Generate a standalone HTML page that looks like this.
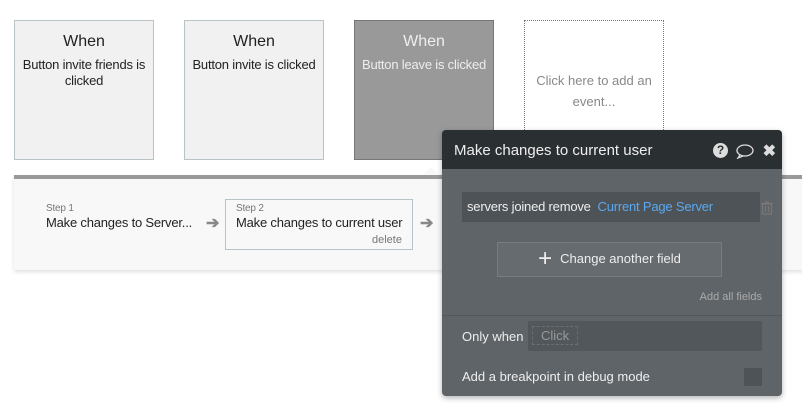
<!DOCTYPE html>
<html><head><meta charset="utf-8"><style>
*{box-sizing:border-box;margin:0;padding:0}
body{width:802px;height:418px;background:#fff;font-family:"Liberation Sans",sans-serif;position:relative;overflow:hidden;color:#222}
.ev{position:absolute;top:20px;width:140px;height:140px;background:#f0f1f0;border:1px solid #b8c3c8;text-align:center}
.ev h3{font-weight:normal;font-size:16px;margin-top:12px}
.ev p{font-size:13px;line-height:16px;margin-top:6px;padding:0 4px;letter-spacing:-0.2px}
.dark{background:#999;border-color:#777;color:#eee}
.add{position:absolute;left:524px;top:20px;width:140px;height:150px;border:1px dotted #777;text-align:center;font-size:13px;color:#888;line-height:21px;padding-top:49px}
.strip{position:absolute;left:14px;top:175px;width:800px;height:95px;background:#f8f8f8;border-top:4px solid #999;box-shadow:0 2px 4px rgba(0,0,0,.12)}
.st{position:absolute;font-size:13px;letter-spacing:-0.2px}
.st small{display:block;font-size:10px;color:#777;margin-bottom:1px}
.arr{position:absolute;color:#888;font-size:16px;font-weight:bold}
.panel{position:absolute;left:442px;top:130px;width:340px;height:266px;background:#5f6468;border-radius:4px;box-shadow:0 2px 6px rgba(0,0,0,.3);color:#eee;overflow:hidden}
.hd{height:39px;background:#2a2f32;font-size:15px;padding:12px 12px}
.field{position:absolute;left:20px;top:62px;width:298px;height:30px;background:#4e5357;font-size:13px;padding:7px 5px;letter-spacing:-0.2px}
.btn{position:absolute;left:55px;top:112px;width:225px;height:35px;background:#666b6f;border:1px solid #777c80;font-size:13px;text-align:center;padding-top:8px}
.sep{position:absolute;left:0;top:185px;width:340px;height:1px;background:#53575a}
</style></head><body>
<div class="ev" style="left:14px"><h3>When</h3><p>Button invite friends is clicked</p></div>
<div class="ev" style="left:184px"><h3>When</h3><p>Button invite is clicked</p></div>
<div class="ev dark" style="left:354px"><h3>When</h3><p>Button leave is clicked</p></div>
<div class="add">Click here to add an<br>event...</div>
<div class="strip">
<div class="st" style="left:32px;top:24px"><small>Step 1</small>Make changes to Server...</div>
<div class="arr" style="left:192px;top:34px">➔</div>
<div style="position:absolute;left:211px;top:20px;width:188px;height:51px;border:1px solid #b8c3c8"></div>
<div class="st" style="left:222px;top:24px"><small>Step 2</small>Make changes to current user</div>
<div style="position:absolute;left:358px;top:55px;font-size:11px;color:#777">delete</div>
<div class="arr" style="left:406px;top:34px">➔</div>
</div>
<div class="panel">
<div class="hd">Make changes to current user
<span style="position:absolute;right:54px;top:13px;width:15px;height:15px;border-radius:50%;background:#ddd;color:#2a2f32;font-size:12px;font-weight:bold;text-align:center;line-height:15px">?</span>
<svg style="position:absolute;right:28px;top:14px" width="18" height="15" viewBox="0 0 18 15"><ellipse cx="9" cy="6.5" rx="8" ry="5.5" fill="none" stroke="#ddd" stroke-width="1.3"/><path d="M4 11 L2 14 L7 12" fill="none" stroke="#ddd" stroke-width="1.3"/></svg>
<span style="position:absolute;right:6px;top:11px;font-size:16px;font-weight:bold;color:#ddd">✖</span>
</div>
<div class="field">servers joined remove&nbsp; <span style="color:#5ba8f0">Current Page Server</span></div>
<svg style="position:absolute;left:319px;top:71px" width="12" height="14" viewBox="0 0 12 14"><rect x="1.5" y="3" width="9" height="10" fill="none" stroke="#777" stroke-width="1.2"/><path d="M0 2.5H12M4 1H8M4.5 5v6M7.5 5v6" stroke="#777" stroke-width="1.2"/></svg>
<div class="btn"><span style="font-size:24px;line-height:16px;vertical-align:-3px;margin-right:8px">+</span>Change another field</div>
<div style="position:absolute;right:20px;top:161px;font-size:11px;color:#aaa">Add all fields</div>
<div class="sep"></div>
<div style="position:absolute;left:20px;top:199px;font-size:13px">Only when</div>
<div style="position:absolute;left:86px;top:191px;width:234px;height:30px;background:#52575b"><span style="position:absolute;left:4px;top:5px;border:1px dashed #6a6f73;padding:1px 8px;font-size:13px;color:#999">Click</span></div>
<div style="position:absolute;left:20px;top:239px;font-size:13px">Add a breakpoint in debug mode</div>
<div style="position:absolute;left:302px;top:238px;width:18px;height:18px;background:#4e5357"></div>
</div>
<div style="position:absolute;left:423px;top:167px;width:0;height:0;border-left:8px solid transparent;border-right:8px solid transparent;border-bottom:8px solid #f8f8f8"></div>
</body></html>
